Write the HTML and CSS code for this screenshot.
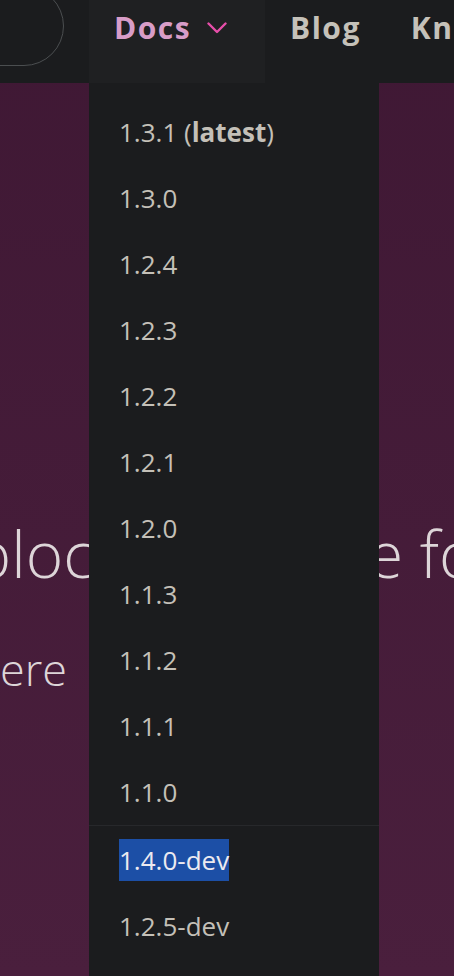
FILE: index.html
```html
<!DOCTYPE html>
<html lang="en">
<head>
<meta charset="utf-8">
<title>Docs</title>
<link rel="stylesheet" href="styles.css">
</head>
<body>
<header class="topbar">
  <div class="search"></div>
  <nav class="nav">
    <div class="nav-item nav-item--open">
      <span class="nav-label nav-label--active">Docs</span>
      <svg class="chevron" width="20" height="12" viewBox="0 0 20 12" aria-hidden="true">
        <path d="M1.5 1.5 L10 10 L18.5 1.5" fill="none" stroke="#e64ea9" stroke-width="2.4" stroke-linecap="round" stroke-linejoin="round"/>
      </svg>
    </div>
    <div class="nav-item"><span class="nav-label">Blog</span></div>
    <div class="nav-item"><span class="nav-label">Knowledge</span></div>
  </nav>
</header>

<main class="hero">
  <h1 class="hero-title">Building blocks to make for everyone</h1>
  <div class="hero-sub-wrap">
    <p class="hero-sub">Everything you need, right here</p>
  </div>
</main>

<div class="dropdown">
  <ul class="menu">
    <li class="menu-item">1.3.1 (<b>latest</b>)</li>
    <li class="menu-item">1.3.0</li>
    <li class="menu-item">1.2.4</li>
    <li class="menu-item">1.2.3</li>
    <li class="menu-item">1.2.2</li>
    <li class="menu-item">1.2.1</li>
    <li class="menu-item">1.2.0</li>
    <li class="menu-item">1.1.3</li>
    <li class="menu-item">1.1.2</li>
    <li class="menu-item">1.1.1</li>
    <li class="menu-item">1.1.0</li>
  </ul>
  <ul class="menu menu--dev">
    <li class="menu-item"><span class="selected">1.4.0-dev</span></li>
    <li class="menu-item">1.2.5-dev</li>
  </ul>
</div>
</body>
</html>
```

FILE: styles.css
```css
* { box-sizing: border-box; }

html, body {
  margin: 0;
  padding: 0;
}

body {
  width: 454px;
  height: 976px;
  overflow: hidden;
  position: relative;
  background: linear-gradient(180deg, #3f1834 0%, #4a1f3d 100%);
  font-family: "Open Sans", "DejaVu Sans", sans-serif;
  color: #c4c0b8;
}

.topbar {
  height: 83px;
  background: #1b1c1e;
  display: flex;
  align-items: flex-start;
  overflow: hidden;
}

.search {
  flex: none;
  width: 120px;
  height: 80px;
  margin-left: -56px;
  margin-top: -14px;
  margin-right: 25px;
  border: 1.5px solid #4b4e50;
  border-radius: 40px;
}

.nav {
  display: flex;
  align-items: stretch;
  height: 83px;
}

.nav-item {
  flex: none;
  display: flex;
  align-items: flex-start;
  padding: 10px 25px 0 25px;
}

.nav-item--open {
  width: 176px;
  background: #1f2022;
  gap: 16px;
}

.nav-item--open .chevron {
  margin-top: 12px;
}

.nav-label {
  font-size: 30px;
  font-weight: 700;
  letter-spacing: 1.5px;
  color: #c5c1b9;
  line-height: 36px;
  white-space: nowrap;
}

.nav-label--active {
  color: #d89dc8;
}

.hero {
  padding-top: 431px;
}

.hero-title {
  margin: 0 0 0 -274px;
  font-size: 64px;
  font-weight: 300;
  line-height: 80px;
  color: #ddd5d8;
  white-space: nowrap;
}

.hero-sub-wrap {
  width: 67px;
  display: flex;
  justify-content: flex-end;
  margin-top: 51px;
}

.hero-sub {
  flex: none;
  margin: 0;
  font-size: 45px;
  font-weight: 300;
  line-height: 48px;
  color: #ddd5d8;
  white-space: nowrap;
}

.dropdown {
  position: absolute;
  top: 83px;
  left: 89px;
  width: 290px;
  bottom: 0;
  background: #1b1c1e;
}

.menu {
  list-style: none;
  margin: 0;
  padding: 0;
}

.menu:first-child {
  padding-top: 16px;
}

.menu--dev {
  border-top: 1px solid #27282b;
  padding-top: 1px;
}

.menu-item {
  height: 66px;
  display: flex;
  align-items: center;
  padding-left: 30px;
  font-size: 26px;
  font-weight: 400;
  color: #c4c0b8;
}

.menu-item b {
  font-weight: 700;
}

.selected {
  background: #1c4fa6;
  color: #eceaf0;
  line-height: 42px;
}
```
